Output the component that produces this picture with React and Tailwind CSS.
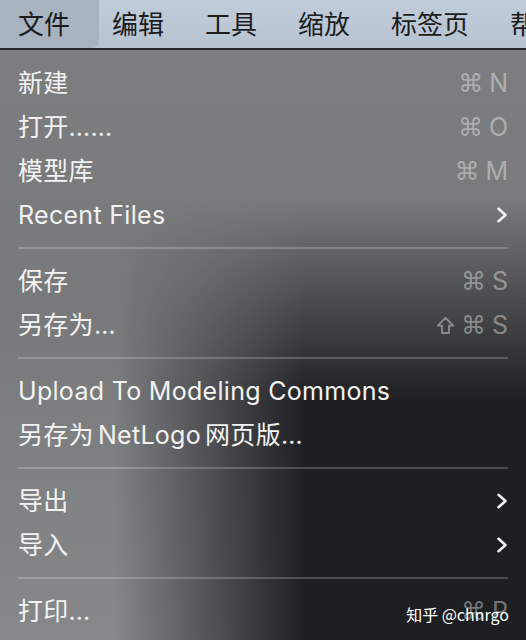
import React from "react";

const menuBar = ["编辑", "工具", "缩放", "标签页", "帮助"];

const groups = [
  [
    { label: "新建", keys: ["⌘", "N"] },
    { label: "打开……", keys: ["⌘", "O"] },
    { label: "模型库", keys: ["⌘", "M"] },
    { label: "Recent Files", sub: true },
  ],
  [
    { label: "保存", keys: ["⌘", "S"] },
    { label: "另存为…", keys: ["⇧", "⌘", "S"] },
  ],
  [
    { label: "Upload To Modeling Commons" },
    {
      label: (
        <>
          另存为<span className="mx-[4px]">NetLogo</span>网页版…
        </>
      ),
      id: "web",
    },
  ],
  [
    { label: "导出", sub: true },
    { label: "导入", sub: true },
  ],
  [{ label: "打印…", keys: ["⌘", "P"] }],
];

const Chevron = () => (
  <svg width="12" height="16" viewBox="0 0 12 16" fill="none">
    <path
      d="M2.5 1.8 L9.5 8 L2.5 14.2"
      stroke="#f4f4f4"
      strokeWidth="2.6"
      strokeLinecap="round"
      strokeLinejoin="round"
    />
  </svg>
);

const ShiftIcon = () => (
  <svg width="19" height="19" viewBox="0 0 19 19" fill="none">
    <path
      d="M9.5 1.8 L17.2 9.6 H13 V17 H6 V9.6 H1.8 Z"
      stroke="currentColor"
      strokeWidth="1.9"
      strokeLinejoin="round"
    />
  </svg>
);

const Shortcut = ({ keys }) => (
  <div className="flex items-center gap-[6px] text-white/40">
    {keys.map((k, i) =>
      k === "⇧" ? (
        <ShiftIcon key={i} />
      ) : k === "⌘" ? (
        <span
          key={i}
          className="text-[25px] leading-none font-['DejaVu_Sans',sans-serif]"
        >
          {k}
        </span>
      ) : (
        <span key={i} className="text-[25px] leading-none">
          {k}
        </span>
      )
    )}
  </div>
);

const MenuRow = ({ item }) => (
  <div className="h-[44px] flex items-center justify-between px-[18px]">
    <span className="text-[25px] text-[#f3f3f3] leading-none tracking-[0.3px]">
      {item.label}
    </span>
    {item.keys && <Shortcut keys={item.keys} />}
    {item.sub && <Chevron />}
  </div>
);

export default function App() {
  return (
    <div className="relative h-[640px] w-[526px] overflow-hidden flex flex-col font-['Inter','Noto_Sans_CJK_SC',sans-serif]">
      {/* menu bar */}
      <div className="h-[48px] shrink-0 flex items-stretch bg-[linear-gradient(180deg,#c0ccd9_0%,#b7c3d0_100%)] text-[#1b1c1e] text-[26px] whitespace-nowrap">
        <div className="w-[99px] shrink-0 flex items-center pl-[18px] bg-[#a8b3bf] rounded-br-[7px]">
          文件
        </div>
        <div className="flex items-center gap-[41px] ml-[13px]">
          {menuBar.map((m) => (
            <span key={m}>{m}</span>
          ))}
        </div>
      </div>
      <div className="h-[2px] shrink-0 bg-[#26272a]" />

      {/* dropdown */}
      <div className="relative flex-1 bg-[linear-gradient(180deg,#7c7d7f_0%,#78797b_45%,#87888a_100%)]">
        {/* dark shading toward the lower right */}
        <div className="absolute inset-0 pointer-events-none bg-[linear-gradient(90deg,transparent_0%,transparent_22%,#1e1f22_58%,#1e1f22_100%)] [mask-image:linear-gradient(180deg,transparent_0px,transparent_150px,black_350px,black_100%)]" />
        <div className="relative pt-[11px]">
          {groups.map((g, gi) => (
            <div key={gi}>
              {gi > 0 && (
                <div className="h-[22px] flex items-center px-[18px]">
                  <div className="h-[2px] w-full bg-white/20" />
                </div>
              )}
              {g.map((item) => (
                <MenuRow key={item.id || item.label} item={item} />
              ))}
            </div>
          ))}
        </div>
      </div>

      {/* watermark */}
      <div className="absolute right-[17px] bottom-[18px] text-white text-[16px] leading-none font-['Noto_Sans_CJK_SC',sans-serif]">
        知乎 @chnrgo
      </div>
    </div>
  );
}
